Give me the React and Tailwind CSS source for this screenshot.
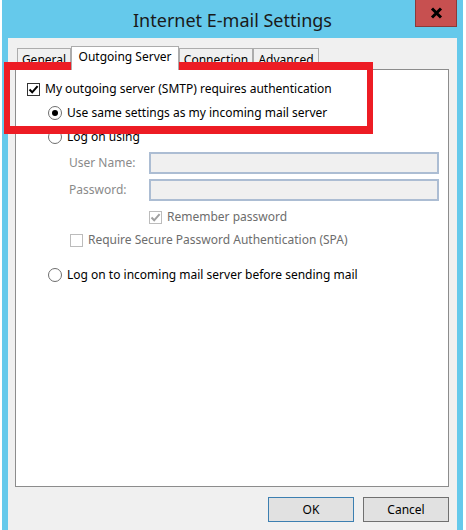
import React from 'react';

const Check = ({ color = '#000' }) => (
  <svg width="11" height="11" viewBox="0 0 11 11" className="block">
    <path d="M1.5 5.5 L4.2 8.3 L9.6 2.2" fill="none" stroke={color} strokeWidth="2" />
  </svg>
);

const Checkbox = ({ checked, disabled }) => (
  <span
    className={`flex h-[13px] w-[13px] shrink-0 items-center justify-center border bg-white ${
      disabled ? 'border-[#bcbcbc]' : 'border-[#333333]'
    }`}
  >
    {checked && <Check color={disabled ? '#a0a0a0' : '#000'} />}
  </span>
);

const Radio = ({ checked }) => (
  <span className="flex h-[14px] w-[14px] shrink-0 items-center justify-center rounded-full border border-[#6e6e6e] bg-white">
    {checked && <span className="h-[6px] w-[6px] rounded-full bg-black" />}
  </span>
);

const Tab = ({ label, width, active }) => (
  <div
    className={`whitespace-nowrap border border-b-0 border-[#acacac] text-center ${width} ${
      active ? 'relative z-10 -mb-px h-[24px] bg-white pt-[2px]' : 'h-[21px] bg-[#f0f0f0] pt-[3px]'
    }`}
  >
    {label}
  </div>
);

export default function App() {
  return (
    <div className="flex h-[530px] w-[466px] bg-white font-['Noto_Sans',sans-serif] text-[12px] leading-[16px] text-black">
      <div className="relative ml-[2px] flex h-full w-[461px] flex-col bg-[#65c9eb] px-[6px]">
        {/* title bar */}
        <div className="relative flex h-[38px] items-center justify-center pt-[2px]">
          <span className="text-[18px] leading-[24px] text-[#1a1a1a]">Internet E-mail Settings</span>
          <div className="absolute right-0 top-0 flex h-[27px] w-[42px] items-center justify-center border border-t-0 border-[#8b3a3a] bg-[#c75050]">
            <svg width="13" height="12" viewBox="0 0 13 12">
              <path d="M2 1.5 L11 10.5 M11 1.5 L2 10.5" stroke="#000" strokeWidth="3" />
            </svg>
          </div>
        </div>

        {/* client area */}
        <div className="flex flex-1 flex-col bg-[#f0f0f0] pl-[7px] pr-[8px] pt-[8px] pb-[8px]">
          <div className="ml-[2px] flex h-[23px] items-end">
            <Tab label="General" width="w-[54px]" />
            <Tab label="Outgoing Server" width="w-[108px]" active />
            <Tab label="Connection" width="w-[74px]" />
            <Tab label="Advanced" width="w-[66px]" />
          </div>

          <div className="flex h-[418px] flex-col border border-[#8c8c8c] bg-white pl-[11px] pt-[11px]">
            <div className="flex h-[16px] items-center gap-[5px]">
              <Checkbox checked />
              <span>My outgoing server (SMTP) requires authentication</span>
            </div>

            <div className="ml-[21px] mt-[8px] flex flex-col">
              <div className="flex h-[16px] items-center gap-[5px]">
                <Radio checked />
                <span>Use same settings as my incoming mail server</span>
              </div>
              <div className="mt-[8px] flex h-[16px] items-center gap-[5px]">
                <Radio />
                <span>Log on using</span>
              </div>

              <div className="ml-[21px] flex flex-col text-[#8a8a8a]">
                <div className="mt-[7px] flex h-[22px] items-center">
                  <span className="w-[80px]">User Name:</span>
                  <div className="h-[22px] w-[290px] border-2 border-[#acbdd3] bg-[#f0f0f0]" />
                </div>
                <div className="mt-[5px] flex h-[22px] items-center">
                  <span className="w-[80px]">Password:</span>
                  <div className="h-[22px] w-[290px] border-2 border-[#acbdd3] bg-[#f0f0f0]" />
                </div>
                <div className="ml-[80px] mt-[8px] flex h-[16px] items-center gap-[5px] text-[#6d6d6d]">
                  <Checkbox checked disabled />
                  <span>Remember password</span>
                </div>
                <div className="ml-[1px] mt-[7px] flex h-[16px] items-center gap-[5px] text-[#6d6d6d]">
                  <Checkbox disabled />
                  <span>Require Secure Password Authentication (SPA)</span>
                </div>
              </div>

              <div className="mt-[19px] flex h-[16px] items-center gap-[5px]">
                <Radio />
                <span>Log on to incoming mail server before sending mail</span>
              </div>
            </div>
          </div>

          <div className="mt-[10px] flex justify-end gap-[9px]">
            <button className="h-[25px] w-[86px] border border-[#3c7fb1] bg-[#e1e1e1]">OK</button>
            <button className="h-[25px] w-[86px] border border-[#707070] bg-[#e1e1e1]">Cancel</button>
          </div>
        </div>

        {/* highlight box */}
        <div className="absolute left-[2px] top-[62px] h-[72px] w-[369px] border-x-[6px] border-y-[8px] border-[#ed1c24]" />
      </div>
    </div>
  );
}
